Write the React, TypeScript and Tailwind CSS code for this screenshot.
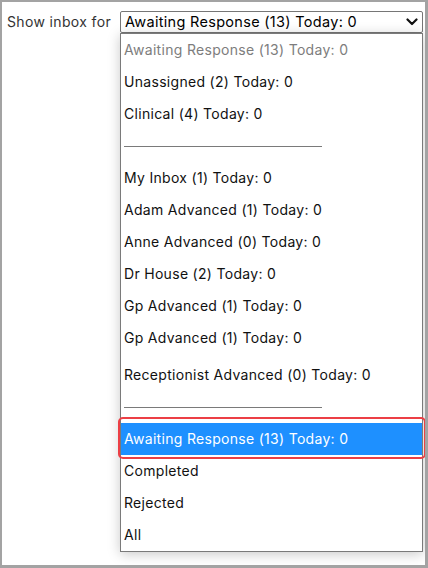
import React from "react";

type Opt = { label: string; kind?: "muted" | "sep" | "active" | "gap" };

const options: Opt[] = [
  { label: "Awaiting Response (13) Today: 0", kind: "muted" },
  { label: "Unassigned (2) Today: 0" },
  { label: "Clinical (4) Today: 0" },
  { label: "", kind: "sep" },
  { label: "My Inbox (1) Today: 0" },
  { label: "Adam Advanced (1) Today: 0" },
  { label: "Anne Advanced (0) Today: 0" },
  { label: "Dr House (2) Today: 0" },
  { label: "Gp Advanced (1) Today: 0" },
  { label: "Gp Advanced (1) Today: 0" },
  { label: "", kind: "gap" },
  { label: "Receptionist Advanced (0) Today: 0" },
  { label: "", kind: "sep" },
  { label: "Awaiting Response (13) Today: 0", kind: "active" },
  { label: "Completed" },
  { label: "Rejected" },
  { label: "All" },
];

export default function App() {
  const font = { fontFamily: "Inter, 'Noto Sans', sans-serif" };
  return (
    <div
      className="w-[428px] h-[568px] bg-white border-[#a3a3a3] border-l-2 border-t-2 border-r-[3px] border-b-[3px] overflow-hidden"
      style={font}
    >
      <div className="flex items-start pt-[9px] pl-[5px]">
        <div className="w-[113px] h-[22px] flex items-center pb-[1px] text-[14px] text-[#333] tracking-[0.35px]">
          Show inbox for
        </div>
        <div className="relative">
          <div className="w-[303px] h-[22px] border border-[#767676] rounded-[2px] bg-white flex items-center justify-between pl-[4px] pr-[5px] pb-[1px] text-[14.5px] text-black">
            <span className="tracking-[0.3px]">Awaiting Response (13) Today: 0</span>
            <svg width="12" height="8" viewBox="0 0 12 8" className="mr-[-1px] mt-[1px]">
              <polyline points="1.5,1.5 6,6 10.5,1.5" fill="none" stroke="#111" strokeWidth="2.2" strokeLinecap="round" strokeLinejoin="round" />
            </svg>
          </div>
          <div className="absolute left-0 top-[22px] w-[303px] bg-white border border-[#7a7a7a] shadow-[0_2px_12px_rgba(0,0,0,0.22)] text-[14px] text-[#111]">
            {options.map((o, i) => {
              if (o.kind === "gap") return <div key={i} className="h-[5px]" />;
              if (o.kind === "sep")
                return (
                  <div key={i} className="h-[32px] flex items-center pl-[3px]">
                    <div className="w-[198px] h-px bg-[#7a7a7a] mt-[1px]" />
                  </div>
                );
              if (o.kind === "active")
                return (
                  <div key={i} className="relative h-[32px] bg-[#1e90ff] text-white flex items-center pl-[3px] pb-[2px] tracking-[0.3px]">
                    {o.label}
                    <div className="absolute left-[-3px] right-[-4px] top-[-6px] bottom-[-4px] border-2 border-[#ec3f45] rounded-[5px]" />
                  </div>
                );
              return (
                <div
                  key={i}
                  className={
                    "h-[32px] flex items-center pl-[3px] pb-[2px] tracking-[0.3px] " +
                    (o.kind === "muted" ? "text-[#7d7d7d]" : "")
                  }
                >
                  {o.label}
                </div>
              );
            })}
          </div>
        </div>
      </div>
    </div>
  );
}
